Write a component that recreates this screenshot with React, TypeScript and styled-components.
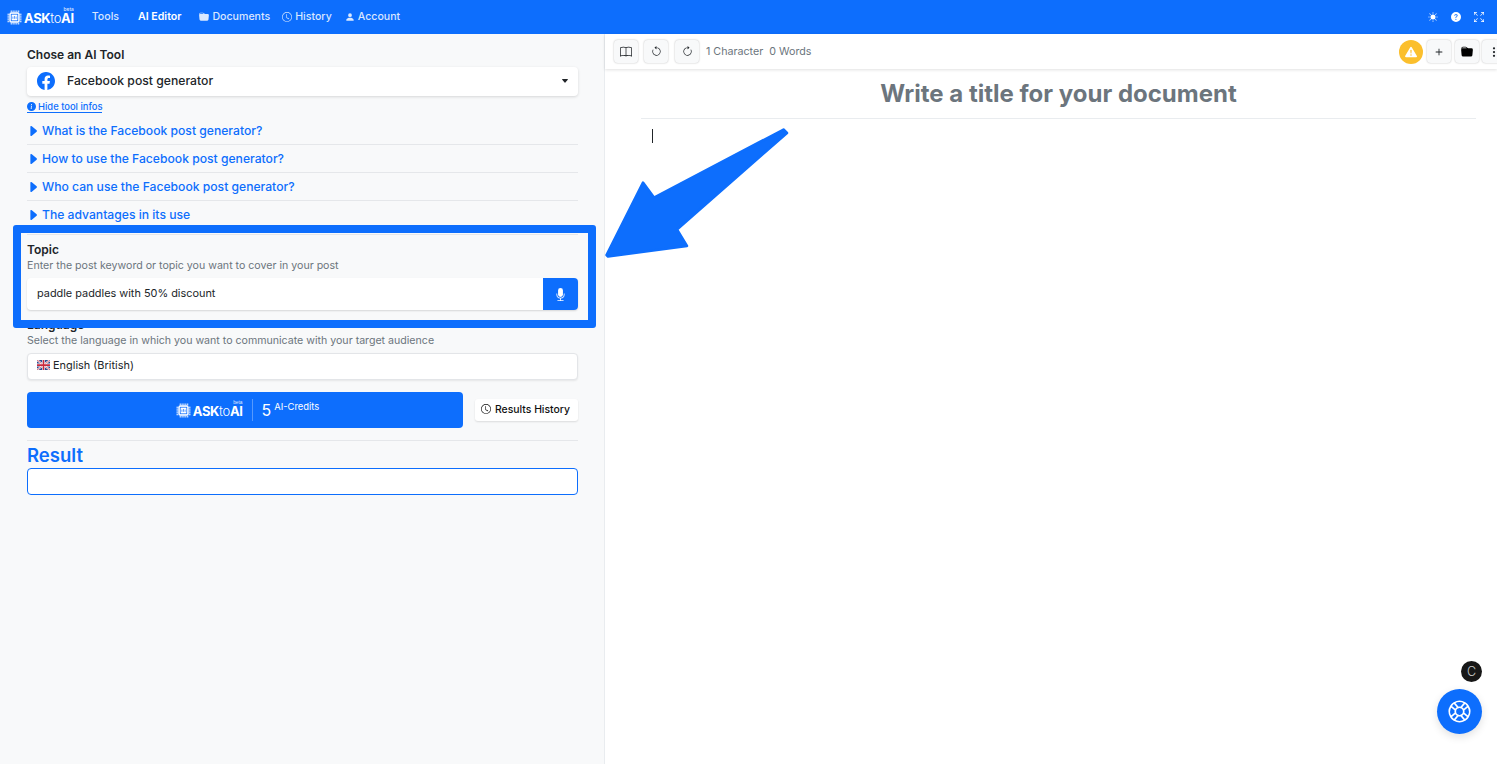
import React from "react";
import styled, { createGlobalStyle } from "styled-components";
import {
  BsFacebook, BsInfoCircleFill, BsCaretRightFill, BsCaretDownFill, BsMicFill, BsClock, BsFolderFill,
  BsPersonFill, BsSunFill, BsQuestionCircleFill, BsArrowsFullscreen, BsBook, BsArrowCounterclockwise,
  BsArrowClockwise, BsPlus, BsThreeDotsVertical, BsExclamationTriangleFill,
} from "react-icons/bs";
import { HiOutlineLifebuoy } from "react-icons/hi2";

const Global = createGlobalStyle`
  * { box-sizing: border-box; }
  html, body { margin: 0; height: 100%; overflow: hidden; }
  body { font-family: Inter, "Noto Sans", sans-serif; background: #fff; color: #212529; }
`;

const blue = "#0d6efd";

const Page = styled.div`
  height: 764px; display: flex; flex-direction: column; position: relative; overflow: hidden;
`;
const Navbar = styled.header`
  height: 34px; flex: none; background: ${blue}; color: #fff; display: flex; align-items: center; padding: 0 12px 0 7px;
`;
const LogoWrap = styled.div`
  display: flex; align-items: center; gap: 2px; color: #fff; position: relative; height: 16px; margin-top: 1px;
`;
const LogoText = styled.span`
  font-family: Inter, sans-serif; font-size: 13px; font-weight: 700; letter-spacing: -0.35px; line-height: 10px; margin-top: 1px;
  & > em { font-style: normal; font-weight: 300; }
`;
const Beta = styled.span`
  position: absolute; right: 0; top: -3px; font-size: 4.8px; line-height: 5px; font-weight: 500; opacity: .85;
`;
const NavLinks = styled.nav`
  display: flex; align-items: center; margin-left: 18px; flex: 1;
`;
const NavLink = styled.a<{ $active?: boolean; $ml?: number }>`
  font-size: 10.6px; line-height: 14px; display: inline-flex; align-items: center; gap: 3px;
  margin-left: ${(p) => p.$ml ?? 0}px; color: ${(p) => (p.$active ? "#fff" : "rgba(255,255,255,.85)")};
  font-weight: ${(p) => (p.$active ? 600 : 500)};
`;
const NavTools = styled.div`
  display: flex; align-items: center; gap: 13px; font-size: 10px; margin-right: 1px;
`;

const Main = styled.main`
  flex: 1; display: flex; min-height: 0;
`;
const LeftPane = styled.section`
  width: 605px; flex: none; background: #f8f9fa; border-right: 1px solid #e9ecef; padding: 13px 26px 0 27px;
  display: flex; flex-direction: column;
`;
const RightPane = styled.section`
  flex: 1; min-width: 0; display: flex; flex-direction: column; background: #fff;
`;

const Label = styled.div`
  font-size: 12px; font-weight: 600; line-height: 15px; color: #212529;
`;
const Help = styled.div`
  font-size: 10.62px; line-height: 14px; color: #6c757d; margin-top: 2px;
`;
const SelectBox = styled.div`
  margin-top: 5px; height: 29px; background: #fff; border-radius: 4px; box-shadow: 0 1px 3px rgba(0,0,0,.14);
  display: flex; align-items: center; padding: 0 9px 2px 10px; position: relative;
  font-size: 12.2px; font-weight: 500; color: #212529;
`;
const FbIcon = styled(BsFacebook)`
  width: 18px; height: 18px; color: ${blue}; margin-right: 12px; flex: none;
`;
const Caret = styled(BsCaretDownFill)`
  width: 8px; height: 8px; margin-left: auto; color: #212529;
`;
const InfoLink = styled.a`
  align-self: flex-start; margin-top: 5px; font-size: 9.4px; line-height: 11px; font-weight: 500; color: ${blue};
  display: inline-flex; align-items: center; gap: 2px; border-bottom: 1px solid ${blue}; height: 12px;
`;
const InfoIcon = styled(BsInfoCircleFill)`
  width: 9px; height: 9px;
`;
const Accordion = styled.div`
  margin-top: 4px; display: flex; flex-direction: column;
`;
const AccordionRow = styled.div`
  height: 28px; border-bottom: 1px solid #e5e7ea; display: flex; align-items: center; gap: 2px;
  font-size: 12.15px; font-weight: 500; color: ${blue};
  &:last-child { height: 34px; padding-bottom: 6px; }
`;
const Arrow = styled(BsCaretRightFill)`
  width: 14px; height: 14px; margin-left: -1px; flex: none;
`;
const FieldLabel = styled(Label)`
  margin-top: 7px;
`;
const InputGroup = styled.div`
  margin-top: 5px; height: 32px; display: flex; background: #fff; border-radius: 4px; box-shadow: 0 1px 2px rgba(0,0,0,.14);
`;
const InputValue = styled.div`
  flex: 1; padding: 0 0 2px 10px; display: flex; align-items: center; font-size: 10.9px; font-weight: 400; color: #212529;
`;
const MicBtn = styled.button`
  width: 35px; border: 0; background: ${blue}; color: #fff; border-radius: 0 4px 4px 0; display: flex; align-items: center; justify-content: center; padding: 0;
`;
const LangSelect = styled.div`
  margin-top: 5px; height: 27px; background: #fff; border: 1px solid #e3e5e8; border-radius: 4px; box-shadow: 0 1px 2px rgba(0,0,0,.08);
  display: flex; align-items: center; padding: 0 0 3px 9px; font-size: 10.95px; gap: 3px; color: #212529;
`;
const Flag = styled.svg`
  width: 13px; height: 10px; flex: none;
`;
const ActionRow = styled.div`
  margin-top: 12px; display: flex; align-items: center; gap: 12px;
`;
const Generate = styled.button`
  flex: 1; height: 36px; background: ${blue}; border: 0; border-radius: 4px; color: #fff; display: flex; align-items: center; justify-content: center; padding: 0 0 0 5px;
`;
const Divider = styled.span`
  width: 1px; height: 22px; background: rgba(255,255,255,.3); margin: 0 9px;
`;
const Credits = styled.span`
  display: inline-flex; align-items: flex-start; font-family: Inter, sans-serif; font-size: 16px; line-height: 18px; font-weight: 400; gap: 3px;
  & > span { font-size: 9.4px; line-height: 10px; margin-top: 1px; }
`;
const HistoryBtn = styled.button`
  width: 103px; height: 22px; background: #fff; border: 0; border-radius: 3px; box-shadow: 0 1px 2px rgba(0,0,0,.12); font: 500 10.4px Inter, sans-serif; color: #111;
  display: flex; align-items: center; justify-content: center; gap: 4px; padding: 0 2px 2px 0;
`;
const Rule = styled.hr`
  border: 0; border-top: 1px solid #e5e7ea; margin: 12px 0 4px; width: 100%;
`;
const ResultTitle = styled.h2`
  margin: 0; font-size: 18.5px; line-height: 21px; font-weight: 600; color: ${blue};
`;
const ResultBox = styled.div`
  margin-top: 2px; height: 27px; background: #fff; border: 1px solid ${blue}; border-radius: 4px;
`;

const Toolbar = styled.div`
  height: 35px; flex: none; display: flex; align-items: center; padding: 0 0 0 9px; box-shadow: 0 1px 3px rgba(0,0,0,.12); overflow: hidden; position: relative;
`;
const ToolBtn = styled.button<{ $ml?: number; $clip?: boolean }>`
  width: 24px; height: 23px; flex: none; border: 0; border-radius: 4px; background: #f8f9fa; box-shadow: 0 0 2px rgba(0,0,0,.28);
  display: flex; align-items: center; justify-content: center; padding: 0; color: #212529; margin-left: ${(p) => p.$ml ?? 0}px;
  margin-right: ${(p) => (p.$clip ? -9 : 0)}px;
`;
const Counter = styled.span`
  margin-left: 7px; font-size: 10.7px; color: #6c757d; white-space: pre; flex: 1;
`;
const Warn = styled.span`
  width: 24px; height: 24px; border-radius: 50%; background: #fbbf2d; color: #fff; display: flex; align-items: center; justify-content: center; flex: none;
`;
const Editor = styled.div`
  padding: 0 21px 0 36px;
`;
const DocTitle = styled.h1`
  margin: 9px 0 0; height: 41px; padding-top: 1px; border-bottom: 1px solid #e9ecef; font-size: 24px; line-height: 30px; font-weight: 700; color: #6c757d; text-align: center;
`;
const Cursor = styled.div`
  width: 1px; height: 14px; background: #212529; margin: 10px 0 0 11px;
`;

const HighlightBox = styled.div`
  position: absolute; left: 13px; top: 225px; width: 583px; height: 103px; border: 8px solid ${blue}; border-radius: 3px; pointer-events: none;
`;
const ArrowOverlay = styled.svg`
  position: absolute; left: 600px; top: 120px; width: 195px; height: 145px; pointer-events: none;
`;
const Badge = styled.div`
  position: absolute; left: 1461px; top: 661px; width: 21px; height: 21px; border-radius: 50%; background: #171717; color: #c8c8c8;
  display: flex; align-items: center; justify-content: center; font-size: 12.5px; font-weight: 300;
`;
const HelpFab = styled.div`
  position: absolute; left: 1437px; top: 689px; width: 45px; height: 45px; border-radius: 50%; background: ${blue}; color: #fff;
  display: flex; align-items: center; justify-content: center; box-shadow: 0 3px 8px rgba(0,0,0,.12);
`;

const Chip: React.FC<{ size: number }> = ({ size }) => (
  <svg width={size} height={size} viewBox="0 0 16 16" fill="none">
    <rect x="2.5" y="2.5" width="11" height="11" rx="2" fill="#fff" />
    <rect x="4.5" y="4.5" width="7" height="7" fill="none" stroke="#0d6efd" strokeWidth=".8" />
    <path d="M6.3 7v2.4M8 6.4v3M9.7 7v2.4" stroke="#0d6efd" strokeWidth=".7" />
    <path d="M4.5 .5v2M6.5 .5v2M8.5 .5v2M10.5 .5v2M12.5 .5v2M4.5 13.5v2M6.5 13.5v2M8.5 13.5v2M10.5 13.5v2M12.5 13.5v2M.5 4.5h2M.5 6.5h2M.5 8.5h2M.5 10.5h2M.5 12.5h2M13.5 4.5h2M13.5 6.5h2M13.5 8.5h2M13.5 10.5h2M13.5 12.5h2" stroke="#fff" strokeWidth="1" />
  </svg>
);

const Logo = () => (
  <LogoWrap>
    <Chip size={15} />
    <LogoText>ASK<em>to</em>AI</LogoText>
    <Beta>beta</Beta>
  </LogoWrap>
);

export default function App() {
  return (
    <Page>
      <Global />
      <Navbar>
        <Logo />
        <NavLinks>
          <NavLink>Tools</NavLink>
          <NavLink $active $ml={19}>AI Editor</NavLink>
          <NavLink $ml={18}><BsFolderFill size={10} />Documents</NavLink>
          <NavLink $ml={12}><BsClock size={10} />History</NavLink>
          <NavLink $ml={13}><BsPersonFill size={10} />Account</NavLink>
        </NavLinks>
        <NavTools>
          <BsSunFill />
          <BsQuestionCircleFill />
          <BsArrowsFullscreen />
        </NavTools>
      </Navbar>
      <Main>
        <LeftPane>
          <Label>Chose an AI Tool</Label>
          <SelectBox>
            <FbIcon />
            Facebook post generator
            <Caret />
          </SelectBox>
          <InfoLink><InfoIcon />Hide tool infos</InfoLink>
          <Accordion>
            <AccordionRow><Arrow />What is the Facebook post generator?</AccordionRow>
            <AccordionRow><Arrow />How to use the Facebook post generator?</AccordionRow>
            <AccordionRow><Arrow />Who can use the Facebook post generator?</AccordionRow>
            <AccordionRow><Arrow />The advantages in its use</AccordionRow>
          </Accordion>
          <FieldLabel>Topic</FieldLabel>
          <Help>Enter the post keyword or topic you want to cover in your post</Help>
          <InputGroup>
            <InputValue>paddle paddles with 50% discount</InputValue>
            <MicBtn><BsMicFill size={13} /></MicBtn>
          </InputGroup>
          <FieldLabel>Language</FieldLabel>
          <Help>Select the language in which you want to communicate with your target audience</Help>
          <LangSelect>
            <Flag viewBox="0 0 60 40" preserveAspectRatio="none">
              <rect width="60" height="40" fill="#2b4a8f" />
              <path d="M0 0l60 40M60 0L0 40" stroke="#fff" strokeWidth="8" />
              <path d="M0 0l60 40M60 0L0 40" stroke="#c8283c" strokeWidth="3" />
              <path d="M30 0v40M0 20h60" stroke="#fff" strokeWidth="12" />
              <path d="M30 0v40M0 20h60" stroke="#c8283c" strokeWidth="7" />
            </Flag>
            English (British)
          </LangSelect>
          <ActionRow>
            <Generate>
              <Logo />
              <Divider />
              <Credits>5<span>AI-Credits</span></Credits>
            </Generate>
            <HistoryBtn><BsClock size={10} />Results History</HistoryBtn>
          </ActionRow>
          <Rule />
          <ResultTitle>Result</ResultTitle>
          <ResultBox />
        </LeftPane>
        <RightPane>
          <Toolbar>
            <ToolBtn><BsBook size={12} /></ToolBtn>
            <ToolBtn $ml={6}><BsArrowCounterclockwise size={11} /></ToolBtn>
            <ToolBtn $ml={7}><BsArrowClockwise size={11} /></ToolBtn>
            <Counter>1 Character  0 Words</Counter>
            <Warn><BsExclamationTriangleFill size={12} /></Warn>
            <ToolBtn $ml={4}><BsPlus size={14} /></ToolBtn>
            <ToolBtn $ml={4}><BsFolderFill size={12} color="#000" /></ToolBtn>
            <ToolBtn $ml={3} $clip><BsThreeDotsVertical size={12} /></ToolBtn>
          </Toolbar>
          <Editor>
            <DocTitle>Write a title for your document</DocTitle>
            <Cursor />
          </Editor>
        </RightPane>
      </Main>
      <HighlightBox />
      <ArrowOverlay viewBox="600 120 195 145">
        <path
          d="M606.5 255 L643 182.5 L654 197.5 L783.5 129.5 L787 133 L677 229.5 L687 246 L608 256.5 Z"
          fill={blue}
          stroke={blue}
          strokeWidth="2.5"
          strokeLinejoin="round"
        />
      </ArrowOverlay>
      <Badge>C</Badge>
      <HelpFab><HiOutlineLifebuoy size={27} /></HelpFab>
    </Page>
  );
}
